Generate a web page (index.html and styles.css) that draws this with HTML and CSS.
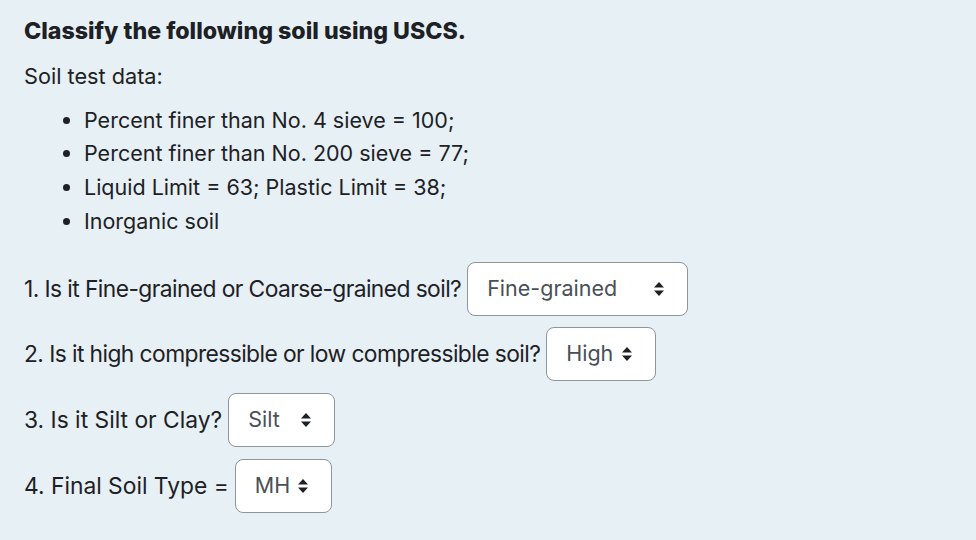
FILE: index.html
```html
<!DOCTYPE html>
<html>
<head>
<meta charset="utf-8">
<link rel="stylesheet" href="styles.css">
</head>
<body>
<div class="qtext">
  <p class="title">Classify the following soil using USCS.</p>
  <p class="intro">Soil test data:</p>
  <ul class="data">
    <li>Percent finer than No. 4 sieve = 100;</li>
    <li>Percent finer than No. 200 sieve = 77;</li>
    <li>Liquid Limit = 63; Plastic Limit = 38;</li>
    <li>Inorganic soil</li>
  </ul>
  <div class="rows">
    <div class="row"><span class="label narrow">1. Is it Fine-grained or Coarse-grained soil?</span>
      <span class="select w1"><span class="val">Fine-grained</span><svg class="arrow" width="10" height="14" viewBox="0 0 10 14"><path d="M5 0L10 5.5H0Z M5 14L0 8.5H10Z" fill="#1d2125"/></svg></span></div>
    <div class="row"><span class="label narrow">2. Is it high compressible or low compressible soil?</span>
      <span class="select w2"><span class="val">High</span><svg class="arrow" width="10" height="14" viewBox="0 0 10 14"><path d="M5 0L10 5.5H0Z M5 14L0 8.5H10Z" fill="#1d2125"/></svg></span></div>
    <div class="row"><span class="label">3. Is it Silt or Clay?</span>
      <span class="select w3"><span class="val">Silt</span><svg class="arrow" width="10" height="14" viewBox="0 0 10 14"><path d="M5 0L10 5.5H0Z M5 14L0 8.5H10Z" fill="#1d2125"/></svg></span></div>
    <div class="row"><span class="label">4. Final Soil Type =</span>
      <span class="select w4"><span class="val">MH</span><svg class="arrow" width="10" height="14" viewBox="0 0 10 14"><path d="M5 0L10 5.5H0Z M5 14L0 8.5H10Z" fill="#1d2125"/></svg></span></div>
  </div>
</div>
</body>
</html>
```
FILE: styles.css
```css
html, body {
  margin: 0;
  padding: 0;
  background: #e7f0f4;
}
body {
  font-family: Inter, "Noto Sans", sans-serif;
  color: #1d2125;
  font-size: 21.5px;
  line-height: 33.7px;
}
.qtext {
  padding: 15px 24px 0 24px;
}
.title {
  margin: 0;
  font-weight: 800;
  font-size: 23.2px;
  line-height: 33px;
}
.intro {
  margin: 12px 0 0 0;
  font-size: 21.7px;
}
.data {
  margin: 10px 0 0 0;
  padding-left: 60px;
}
.rows {
  margin-top: 23px;
  display: flex;
  flex-direction: column;
  gap: 11.7px;
}
.row {
  display: flex;
  align-items: center;
  height: 54px;
}
.label {
  white-space: nowrap;
  font-size: 22.8px;
}
.narrow {
  letter-spacing: -0.58px;
}
.select {
  margin-left: 6px;
  box-sizing: border-box;
  height: 54px;
  border: 1px solid #8f959e;
  border-radius: 8px;
  background: #fff;
  display: flex;
  align-items: center;
  justify-content: space-between;
  padding: 0 23px 0 19px;
  color: #495057;
  font-size: 21.5px;
}
.w1 { width: 221px; }
.w2 { width: 110px; }
.w3 { width: 107px; }
.w4 { width: 97px; }
.arrow { display: block; }
```
